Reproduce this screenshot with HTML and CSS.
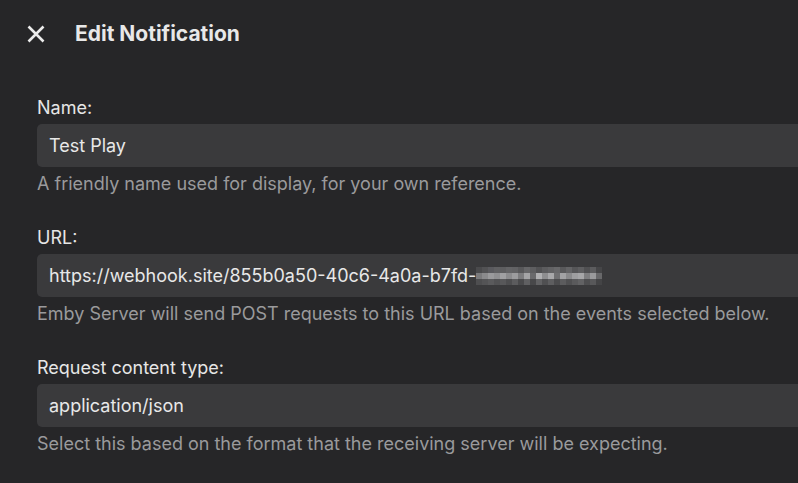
FILE: index.html
```html
<!DOCTYPE html>
<html lang="en">
<head>
<meta charset="utf-8">
<title>Edit Notification</title>
<link rel="stylesheet" href="styles.css">
</head>
<body>
<div class="page">
  <header class="header">
    <button class="close" aria-label="Close">
      <svg viewBox="0 0 18 18" width="18" height="18"><path d="M1.5 1.5 L16.5 16.5 M16.5 1.5 L1.5 16.5" stroke="#ececec" stroke-width="2.6" stroke-linecap="butt" fill="none"/></svg>
    </button>
    <h1 class="title">Edit Notification</h1>
  </header>
  <form class="form">
    <div class="field">
      <label class="label">Name:</label>
      <div class="input">Test Play</div>
      <div class="help">A friendly name used for display, for your own reference.</div>
    </div>
    <div class="field">
      <label class="label">URL:</label>
      <div class="input">https://webhook.site/855b0a50-40c6-4a0a-b7fd-<span class="blur"><svg width="128" height="18" viewBox="0 0 128 18" shape-rendering="crispEdges">
        <rect x="0" y="0" width="6" height="6" fill="#4a4a4c"/><rect x="6" y="0" width="6" height="6" fill="#525254"/><rect x="12" y="0" width="6" height="6" fill="#5a5a5e"/><rect x="18" y="0" width="6" height="6" fill="#606062"/><rect x="24" y="0" width="6" height="6" fill="#5e5e60"/><rect x="30" y="0" width="6" height="6" fill="#646466"/><rect x="36" y="0" width="6" height="6" fill="#626264"/><rect x="42" y="0" width="6" height="6" fill="#58585a"/><rect x="48" y="0" width="6" height="6" fill="#666668"/><rect x="54" y="0" width="6" height="6" fill="#5e5e60"/><rect x="60" y="0" width="6" height="6" fill="#525254"/><rect x="66" y="0" width="6" height="6" fill="#5c5c5e"/><rect x="72" y="0" width="6" height="6" fill="#626264"/><rect x="78" y="0" width="6" height="6" fill="#68686a"/><rect x="84" y="0" width="6" height="6" fill="#59595b"/><rect x="90" y="0" width="6" height="6" fill="#646466"/><rect x="96" y="0" width="6" height="6" fill="#565658"/><rect x="102" y="0" width="6" height="6" fill="#5e5e60"/><rect x="108" y="0" width="6" height="6" fill="#505052"/><rect x="114" y="0" width="6" height="6" fill="#5c5c5e"/><rect x="120" y="0" width="6" height="6" fill="#464648"/>
        <rect x="0" y="6" width="6" height="6" fill="#7a7a7c"/><rect x="6" y="6" width="6" height="6" fill="#8a8a8c"/><rect x="12" y="6" width="6" height="6" fill="#9a9a9c"/><rect x="18" y="6" width="6" height="6" fill="#909092"/><rect x="24" y="6" width="6" height="6" fill="#a0a0a2"/><rect x="30" y="6" width="6" height="6" fill="#8c8c8e"/><rect x="36" y="6" width="6" height="6" fill="#9c9c9e"/><rect x="42" y="6" width="6" height="6" fill="#7c7c7e"/><rect x="48" y="6" width="6" height="6" fill="#a4a4a6"/><rect x="54" y="6" width="6" height="6" fill="#6a6a6c"/><rect x="60" y="6" width="6" height="6" fill="#b0b0b2"/><rect x="66" y="6" width="6" height="6" fill="#8e8e90"/><rect x="72" y="6" width="6" height="6" fill="#a8a8aa"/><rect x="78" y="6" width="6" height="6" fill="#707072"/><rect x="84" y="6" width="6" height="6" fill="#a2a2a4"/><rect x="90" y="6" width="6" height="6" fill="#8a8a8c"/><rect x="96" y="6" width="6" height="6" fill="#9e9ea0"/><rect x="102" y="6" width="6" height="6" fill="#a6a6a8"/><rect x="108" y="6" width="6" height="6" fill="#7e7e80"/><rect x="114" y="6" width="6" height="6" fill="#9a9a9c"/><rect x="120" y="6" width="6" height="6" fill="#68686a"/>
        <rect x="0" y="12" width="6" height="6" fill="#4e4e50"/><rect x="6" y="12" width="6" height="6" fill="#545456"/><rect x="12" y="12" width="6" height="6" fill="#5a5a5c"/><rect x="18" y="12" width="6" height="6" fill="#525254"/><rect x="24" y="12" width="6" height="6" fill="#58585a"/><rect x="30" y="12" width="6" height="6" fill="#4e4e50"/><rect x="36" y="12" width="6" height="6" fill="#5c5c5e"/><rect x="42" y="12" width="6" height="6" fill="#4a4a4c"/><rect x="48" y="12" width="6" height="6" fill="#606062"/><rect x="54" y="12" width="6" height="6" fill="#48484a"/><rect x="60" y="12" width="6" height="6" fill="#626264"/><rect x="66" y="12" width="6" height="6" fill="#505052"/><rect x="72" y="12" width="6" height="6" fill="#5e5e60"/><rect x="78" y="12" width="6" height="6" fill="#4c4c4e"/><rect x="84" y="12" width="6" height="6" fill="#5c5c5e"/><rect x="90" y="12" width="6" height="6" fill="#505052"/><rect x="96" y="12" width="6" height="6" fill="#5a5a5c"/><rect x="102" y="12" width="6" height="6" fill="#626264"/><rect x="108" y="12" width="6" height="6" fill="#4e4e50"/><rect x="114" y="12" width="6" height="6" fill="#58585a"/><rect x="120" y="12" width="6" height="6" fill="#444446"/>
      </svg></span></div>
      <div class="help">Emby Server will send POST requests to this URL based on the events selected below.</div>
    </div>
    <div class="field">
      <label class="label">Request content type:</label>
      <div class="input">application/json</div>
      <div class="help">Select this based on the format that the receiving server will be expecting.</div>
    </div>
  </form>
</div>
</body>
</html>
```

FILE: styles.css
```css
html, body {
  margin: 0;
  padding: 0;
  background: #262628;
  overflow: hidden;
}
body {
  font-family: Inter, "Noto Sans", sans-serif;
  color: #e6e6e6;
  width: 798px;
  height: 483px;
}
.header {
  display: flex;
  align-items: center;
  height: 68px;
  padding-left: 27px;
}
.close {
  display: flex;
  align-items: center;
  justify-content: center;
  width: 18px;
  height: 18px;
  padding: 0;
  border: 0;
  background: none;
  margin-right: 30px;
}
.title {
  margin: 0;
  font-size: 21px;
  font-weight: 700;
  color: #e8e8e8;
  line-height: 24px;
}
.form {
  padding-left: 37px;
  padding-top: 28px;
}
.field {
  display: flex;
  flex-direction: column;
  margin-bottom: 30px;
}
.label {
  font-size: 18px;
  line-height: 24px;
  color: #e6e6e6;
  margin-bottom: 4px;
}
.input {
  box-sizing: border-box;
  height: 43px;
  width: 800px;
  background: #3a3a3c;
  border-radius: 5px;
  padding-left: 12px;
  display: flex;
  align-items: center;
  font-size: 18px;
  color: #e8e8e8;
  white-space: nowrap;
}
.blur {
  display: inline-flex;
  margin-left: 0;
}
.help {
  margin-top: 5px;
  font-size: 18px;
  line-height: 24px;
  color: #9a9a9c;
  white-space: nowrap;
}
```
